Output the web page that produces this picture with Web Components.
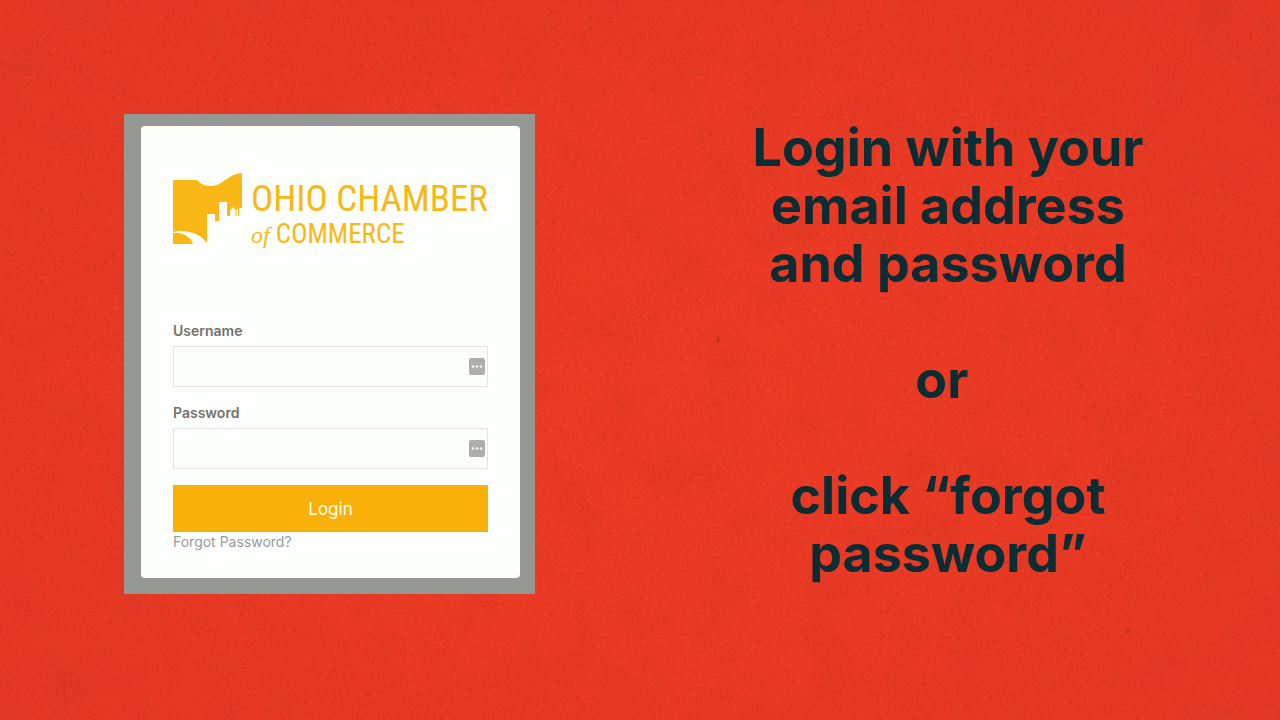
<!DOCTYPE html>
<html lang="en">
<head>
<meta charset="utf-8">
<meta name="viewport" content="width=device-width, initial-scale=1">
<title>Ohio Chamber of Commerce - Login</title>
<style>
    body {
        margin: 0;
        background: #e93722;
        font-family: Inter, "Open Sans", sans-serif;
    }
</style>
</head>
<body>
<login-slide>
    <login-panel slot="panel">
        <chamber-logo></chamber-logo>
        <login-form></login-form>
    </login-panel>
    <slide-message>
        <p>Login with your<br>email address<br>and password</p>
        <p>or&nbsp;</p>
        <p>click “forgot<br>password”</p>
    </slide-message>
</login-slide>

<script>
class LoginSlide extends HTMLElement {
    constructor() {
        super();
        this.attachShadow({ mode: "open" });
        this.shadowRoot.innerHTML = `
            <style>
                :host {
                    display: block;
                    position: relative;
                    overflow: hidden;
                    min-height: 100vh;
                    background: radial-gradient(ellipse at 50% 52%, #f03b25 0%, #ee3a24 50%, #e53823 100%);
                }
                .paper {
                    position: absolute;
                    inset: 0;
                    width: 100%;
                    height: 100%;
                }
                main {
                    position: relative;
                    display: grid;
                    grid-template-columns: minmax(320px, 411px) minmax(0, 1fr);
                    column-gap: 81px;
                    align-items: start;
                    box-sizing: border-box;
                    padding: 114px 0 0 124px;
                }
            </style>
            <svg class="paper" aria-hidden="true">
                <filter id="grain" x="0" y="0" width="100%" height="100%" color-interpolation-filters="sRGB">
                    <feTurbulence type="fractalNoise" baseFrequency="0.3" numOctaves="3" seed="4"/>
                    <feColorMatrix values="0 0 0 0 0.6  0 0 0 0 0.18  0 0 0 0 0.12  0.36 0 0 0 -0.13"/>
                </filter>
                <filter id="stain" x="0" y="0" width="100%" height="100%" color-interpolation-filters="sRGB">
                    <feTurbulence type="fractalNoise" baseFrequency="0.02" numOctaves="5" seed="9"/>
                    <feColorMatrix values="0 0 0 0 0.6  0 0 0 0 0.18  0 0 0 0 0.12  0.18 0 0 0 -0.07"/>
                </filter>
                <rect width="100%" height="100%" filter="url(#stain)"/>
                <rect width="100%" height="100%" filter="url(#grain)"/>
                <g fill="#a92a1e" opacity="0.5">
                    <ellipse cx="718" cy="339" rx="1.5" ry="4"/>
                    <circle cx="649" cy="319" r="1"/>
                    <circle cx="195" cy="83" r="1"/>
                    <circle cx="227" cy="101" r="1.5"/>
                    <circle cx="1016" cy="117" r="1"/>
                    <ellipse cx="1128" cy="631" rx="2" ry="3"/>
                </g>
            </svg>
            <main>
                <slot name="panel"></slot>
                <slot></slot>
            </main>
        `;
    }
}

class LoginPanel extends HTMLElement {
    constructor() {
        super();
        this.attachShadow({ mode: "open" });
        this.shadowRoot.innerHTML = `
            <style>
                :host {
                    display: block;
                    background: #959893;
                    padding: 12px 15px 16px 17px;
                }
                .card {
                    display: flex;
                    flex-direction: column;
                    gap: 72px;
                    background: #fdfffc;
                    border-radius: 4px;
                    padding: 46px 32px 26px;
                }
            </style>
            <div class="card"><slot></slot></div>
        `;
    }
}

class ChamberLogo extends HTMLElement {
    constructor() {
        super();
        this.attachShadow({ mode: "open" });
        this.shadowRoot.innerHTML = `
            <style>
                :host {
                    display: flex;
                    gap: 8px;
                    color: #fab817;
                    white-space: nowrap;
                }
                svg {
                    flex: none;
                    width: 70px;
                    height: 74px;
                }
                .name {
                    display: flex;
                    flex-direction: column;
                    padding-top: 7px;
                    font-family: "Roboto Condensed", "Liberation Sans Narrow", Roboto, sans-serif;
                    font-weight: 400;
                }
                .top {
                    font-size: 37px;
                    line-height: 40px;
                }
                .bottom {
                    font-size: 27px;
                    line-height: 30px;
                }
                i {
                    font-family: "Liberation Serif", serif;
                    font-size: 24px;
                    line-height: 24px;
                }
            </style>
            <svg viewBox="0 0 70 74" aria-hidden="true">
                <path fill="#fab817" d="M0 8H24C29 14 38 16 46 12C55 7 58 2 69 1V36H66V44H65V37H63.500V44H62.500V38L60 35L57 39V44H54V30H46V49H42V42H34V71C27 62 18 59 6 59L0 60Z"/>
                <path fill="#fab817" d="M0 61C9 60 17 64 20 72H0Z"/>
            </svg>
            <div class="name">
                <span class="top">OHIO CHAMBER</span>
                <span class="bottom"><i>of</i> COMMERCE</span>
            </div>
        `;
    }
}

class LoginForm extends HTMLElement {
    constructor() {
        super();
        this.attachShadow({ mode: "open" });
        this.shadowRoot.innerHTML = `
            <style>
                :host {
                    display: block;
                    color: #77706c;
                }
                form {
                    display: flex;
                    flex-direction: column;
                }
                label {
                    font-size: 14px;
                    font-weight: 600;
                    line-height: 20px;
                    padding-bottom: 5px;
                }
                .field {
                    display: flex;
                    align-items: center;
                    border: 1px solid #e2e4e6;
                    height: 39px;
                    padding-right: 2px;
                    margin-bottom: 16px;
                }
                input {
                    flex: 1;
                    min-width: 0;
                    align-self: stretch;
                    border: 0;
                    outline: 0;
                    padding: 0 12px;
                    background: transparent;
                    font: inherit;
                }
                svg {
                    flex: none;
                    width: 16px;
                    height: 17px;
                }
                button {
                    height: 47px;
                    border: 0;
                    padding: 0;
                    background: #f9b008;
                    color: #fffdf0;
                    font: inherit;
                    font-size: 17px;
                }
                a {
                    align-self: flex-start;
                    color: #9a9b9c;
                    font-size: 14px;
                    line-height: 20px;
                    text-decoration: none;
                }
            </style>
            <form>
                ${this.field("username", "Username", "text")}
                ${this.field("password", "Password", "password")}
                <button type="button">Login</button>
                <a href="#forgot">Forgot Password?</a>
            </form>
        `;
    }

    field(id, label, type) {
        return `
            <label for="${id}">${label}</label>
            <div class="field">
                <input id="${id}" name="${id}" type="${type}">
                <svg viewBox="0 0 16 17" aria-hidden="true">
                    <rect width="16" height="17" rx="2" fill="#adafad"/>
                    <g fill="#f4f5f4">
                        <circle cx="4" cy="8.5" r="1.3"/>
                        <circle cx="8" cy="8.5" r="1.3"/>
                        <circle cx="12" cy="8.5" r="1.3"/>
                    </g>
                </svg>
            </div>
        `;
    }
}

class SlideMessage extends HTMLElement {
    constructor() {
        super();
        this.attachShadow({ mode: "open" });
        this.shadowRoot.innerHTML = `
            <style>
                :host {
                    display: flex;
                    flex-direction: column;
                    gap: 58px;
                    padding-top: 5px;
                    color: #0a2c33;
                    font-size: 52px;
                    font-weight: 700;
                    line-height: 58px;
                    text-align: center;
                }
                ::slotted(p) {
                    margin: 0;
                }
            </style>
            <slot></slot>
        `;
    }
}

customElements.define("login-slide", LoginSlide);
customElements.define("login-panel", LoginPanel);
customElements.define("chamber-logo", ChamberLogo);
customElements.define("login-form", LoginForm);
customElements.define("slide-message", SlideMessage);
</script>
</body>
</html>
